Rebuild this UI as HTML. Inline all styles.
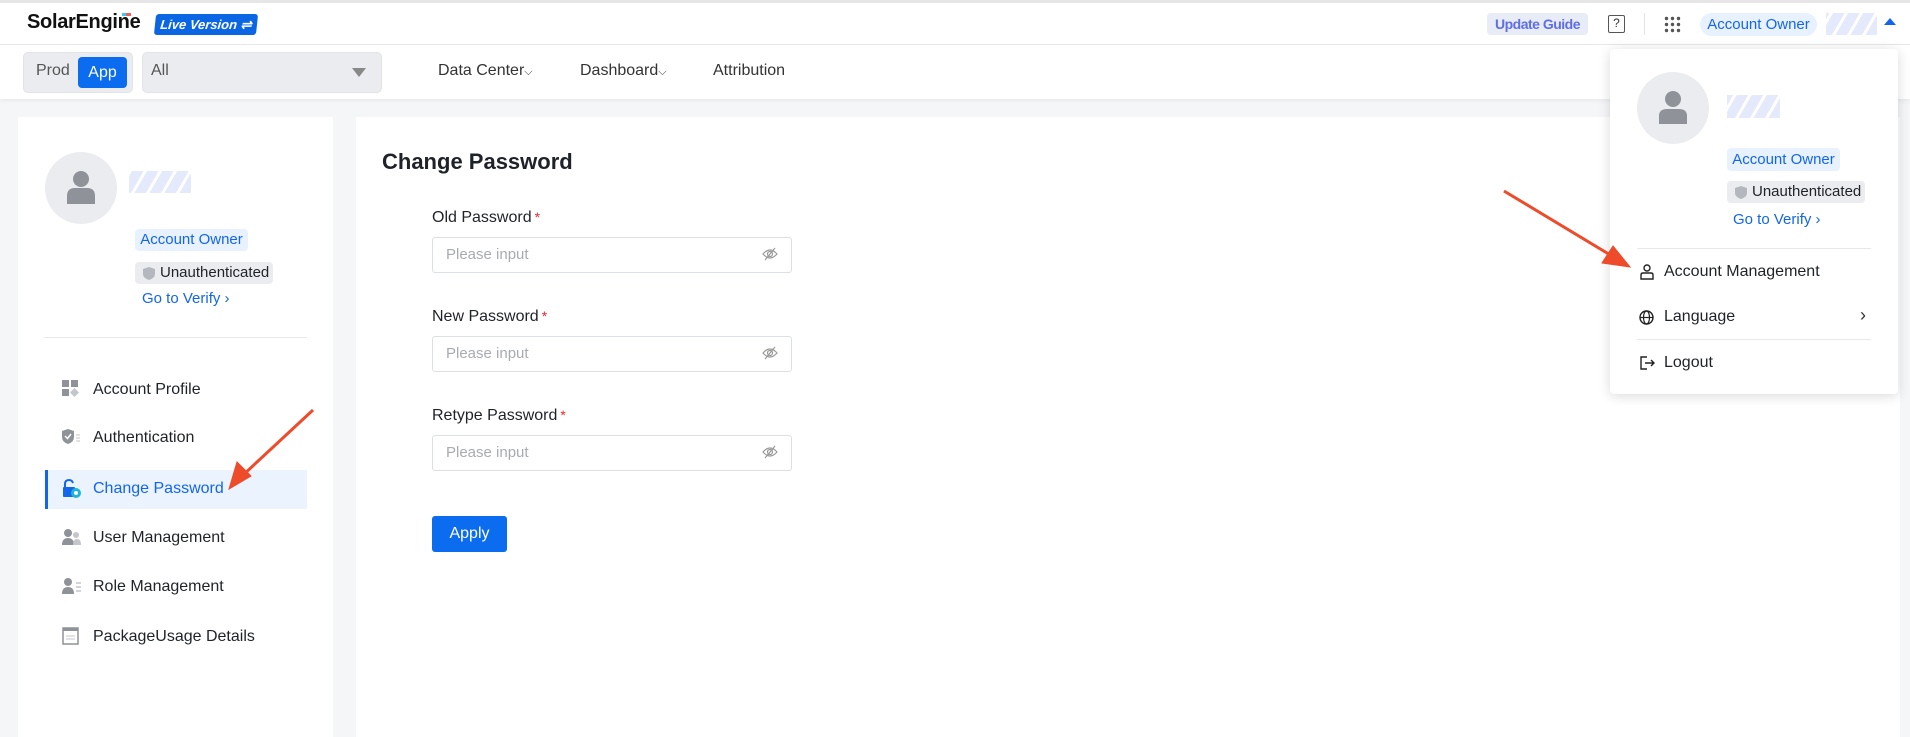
<!DOCTYPE html>
<html><head><meta charset="utf-8"><style>
*{box-sizing:border-box;margin:0;padding:0}
body{width:1910px;height:726px;overflow:hidden;background:#f5f6f8;font-family:"Liberation Sans",Arial,sans-serif;color:#1f2329;position:relative}
.abs{position:absolute}
.hdr{left:0;top:0;width:1910px;height:45px;background:#fff;border-top:3px solid #e6e6e6;border-bottom:1px solid #e8e8e8}
.bar2{left:0;top:45px;width:1910px;height:54px;background:#fff;box-shadow:0 2px 4px rgba(0,0,0,.05)}
.tagb{background:#e8f1fe;color:#1366ec;border-radius:4px;font-size:15px}
.tagg{background:#ebecef;color:#1f2329;border-radius:4px;font-size:15px}
.stripe{background:repeating-linear-gradient(-60deg,#e4e9fb 0 10px,#fff 10px 13px)}
.menu{left:62px;font-size:16px;color:#1f2329;height:20px;line-height:20px}
.menu span{position:absolute;left:31px;white-space:nowrap}
.lbl{left:432px;font-size:16px;color:#1f2329}
.lbl b{color:#f5222d;font-weight:normal;font-size:14px;margin-left:3px}
.inp{left:432px;width:360px;height:36px;border:1px solid #dcdfe6;border-radius:3px;background:#fff;font-size:15px;color:#a8abb2;line-height:34px;padding-left:13px}
.inp svg{position:absolute;right:13px;top:9px}
.dd{font-size:16px;color:#1f2329}
</style></head><body>
<div class="abs hdr"></div>
<div class="abs" style="left:27px;top:11px;font-size:20px;font-weight:bold;letter-spacing:-0.3px;color:#111">SolarEngine</div>
<div class="abs" style="left:122px;top:13px;width:8px;height:3px;background:#3cc8f0"></div>
<div class="abs" style="left:126px;top:13px;width:5px;height:3px;background:#f06060"></div>
<div class="abs" style="left:155px;top:14px;width:102px;height:21px;background:#0b66e4;border-radius:3px;transform:skewX(-6deg);color:#fff;font-size:13px;font-weight:bold;font-style:italic;line-height:21px;text-align:center">Live Version ⇌</div>
<div class="abs" style="left:1487px;top:13px;width:101px;height:22px;background:#e8ecf7;border-radius:4px;font-size:14px;font-weight:bold;color:#5d6ee8;line-height:22px;text-align:center;letter-spacing:-0.5px">Update Guide</div>
<div class="abs" style="left:1608px;top:15px;width:17px;height:18px;border:1.5px solid #555;border-radius:2px;font-size:12px;text-align:center;line-height:15px;color:#333">?</div>
<div class="abs" style="left:1644px;top:13px;width:1px;height:22px;background:#e3e3e3"></div>
<svg class="abs" style="left:1664px;top:16px" width="17" height="17"><g fill="#555"><circle cx="2.5" cy="2.5" r="1.7"/><circle cx="8.5" cy="2.5" r="1.7"/><circle cx="14.5" cy="2.5" r="1.7"/><circle cx="2.5" cy="8.5" r="1.7"/><circle cx="8.5" cy="8.5" r="1.7"/><circle cx="14.5" cy="8.5" r="1.7"/><circle cx="2.5" cy="14.5" r="1.7"/><circle cx="8.5" cy="14.5" r="1.7"/><circle cx="14.5" cy="14.5" r="1.7"/></g></svg>
<div class="abs tagb" style="left:1700px;top:13px;width:117px;height:23px;border-radius:12px;line-height:23px;text-align:center">Account Owner</div>
<div class="abs stripe" style="left:1826px;top:13px;width:51px;height:22px"></div>
<div class="abs" style="left:1884px;top:18px;width:0;height:0;border-left:6px solid transparent;border-right:6px solid transparent;border-bottom:7px solid #1366ec"></div>

<div class="abs bar2"></div>
<div class="abs" style="left:23px;top:52px;width:110px;height:41px;background:#ebecf0;border-radius:5px;border:1px solid #e2e3e7"></div>
<div class="abs" style="left:36px;top:62px;font-size:16px;color:#555">Prod</div>
<div class="abs" style="left:78px;top:57px;width:49px;height:31px;background:#0b6cf0;border-radius:4px;color:#fff;font-size:16px;line-height:31px;text-align:center">App</div>
<div class="abs" style="left:142px;top:52px;width:240px;height:41px;background:#ebecf0;border-radius:5px;border:1px solid #e2e3e7"></div>
<div class="abs" style="left:151px;top:62px;font-size:16px;color:#555">All</div>
<div class="abs" style="left:352px;top:68px;border-left:7px solid transparent;border-right:7px solid transparent;border-top:9px solid #888"></div>
<div class="abs" style="left:438px;top:62px;font-size:16px;color:#333">Data Center<span style="font-size:11px">⌵</span></div>
<div class="abs" style="left:580px;top:62px;font-size:16px;color:#333">Dashboard<span style="font-size:11px">⌵</span></div>
<div class="abs" style="left:713px;top:62px;font-size:16px;color:#333">Attribution</div>

<!-- left card -->
<div class="abs" style="left:18px;top:117px;width:315px;height:620px;background:#fff"></div>
<div class="abs" style="left:45px;top:152px;width:72px;height:72px;border-radius:50%;background:#ebecef"></div>
<svg class="abs" style="left:67px;top:170px" width="28" height="34"><circle cx="14" cy="9" r="8" fill="#8f9299"/><path d="M0 34V26Q0 18 8 18H20Q28 18 28 26V34Z" fill="#8f9299"/></svg>
<div class="abs stripe" style="left:129px;top:171px;width:62px;height:22px"></div>
<div class="abs tagb" style="left:135px;top:229px;width:113px;height:22px;line-height:22px;text-align:center">Account Owner</div>
<div class="abs tagg" style="left:135px;top:262px;width:138px;height:22px;line-height:22px;padding-left:25px">Unauthenticated</div>
<svg class="abs" style="left:143px;top:267px" width="12" height="13"><path d="M6 0L12 2V7Q12 11 6 13Q0 11 0 7V2Z" fill="#b4b7bd"/></svg>
<div class="abs" style="left:142px;top:290px;font-size:15px;color:#1366ec">Go to Verify ›</div>
<div class="abs" style="left:44px;top:337px;width:263px;height:1px;background:#e8e8e8"></div>

<div class="abs" style="left:45px;top:470px;width:262px;height:39px;background:#ebf3fe;border-left:3px solid #1366ec"></div>
<div class="abs menu" style="top:380px"><svg width="18" height="18"><rect x="0" y="0" width="7" height="7" fill="#8f9299"/><rect x="9" y="0" width="7" height="7" fill="#8f9299"/><rect x="0" y="9" width="7" height="7" fill="#8f9299"/><path d="M12.5 8L17 12.5L12.5 17L8 12.5Z" fill="#c4c6cc"/></svg><span>Account Profile</span></div>
<div class="abs menu" style="top:428px"><svg width="18" height="18"><path d="M6 1L12 3V9Q12 14 6 16Q0 14 0 9V3Z" fill="#8f9299"/><path d="M3 8L5.5 10.5L9 6" stroke="#fff" stroke-width="1.5" fill="none"/><path d="M14 7H18M14 10H18M14 13H18" stroke="#c4c6cc"/></svg><span>Authentication</span></div>
<div class="abs menu" style="top:479px"><svg width="20" height="20"><path d="M3 8V5Q3 1 7 1Q10 1 11 4" stroke="#1366ec" stroke-width="2" fill="none"/><rect x="1" y="8" width="12" height="10" rx="1" fill="#1366ec"/><circle cx="14" cy="14" r="5" fill="#20b4d8"/><circle cx="14" cy="14" r="2" fill="#fff"/></svg><span style="color:#1366ec">Change Password</span></div>
<div class="abs menu" style="top:528px"><svg width="20" height="18"><circle cx="6" cy="5" r="4" fill="#8f9299"/><path d="M0 17Q0 10 6 10Q12 10 12 17Z" fill="#8f9299"/><circle cx="14" cy="7" r="3" fill="#c4c6cc"/><path d="M11 17Q11 11 15 11Q19 11 19 17Z" fill="#c4c6cc"/></svg><span>User Management</span></div>
<div class="abs menu" style="top:577px"><svg width="20" height="18"><circle cx="6" cy="5" r="4" fill="#8f9299"/><path d="M0 17Q0 10 6 10Q12 10 12 17Z" fill="#8f9299"/><path d="M14 6H19M14 10H19M14 14H19" stroke="#c4c6cc" stroke-width="1.5"/></svg><span>Role Management</span></div>
<div class="abs menu" style="top:627px"><svg width="18" height="18"><rect x="1" y="1" width="15" height="16" fill="none" stroke="#8f9299" stroke-width="1.5"/><rect x="1" y="1" width="15" height="3" fill="#8f9299"/><path d="M4 9H13M4 12H13" stroke="#c4c6cc"/></svg><span>PackageUsage Details</span></div>

<!-- main -->
<div class="abs" style="left:356px;top:117px;width:1544px;height:620px;background:#fff"></div>
<div class="abs" style="left:382px;top:149px;font-size:22px;font-weight:bold;color:#1f2329">Change Password</div>
<div class="abs lbl" style="top:209px">Old Password<b>*</b></div>
<div class="abs inp" style="top:237px">Please input<svg width="16" height="14"><path d="M1 7Q8 -1 15 7Q8 15 1 7Z" fill="none" stroke="#999" stroke-width="1.2"/><circle cx="8" cy="7" r="2.5" fill="none" stroke="#999" stroke-width="1.2"/><path d="M3 13L13 1" stroke="#999" stroke-width="1.2"/></svg></div>
<div class="abs lbl" style="top:308px">New Password<b>*</b></div>
<div class="abs inp" style="top:336px">Please input<svg width="16" height="14"><path d="M1 7Q8 -1 15 7Q8 15 1 7Z" fill="none" stroke="#999" stroke-width="1.2"/><circle cx="8" cy="7" r="2.5" fill="none" stroke="#999" stroke-width="1.2"/><path d="M3 13L13 1" stroke="#999" stroke-width="1.2"/></svg></div>
<div class="abs lbl" style="top:407px">Retype Password<b>*</b></div>
<div class="abs inp" style="top:435px">Please input<svg width="16" height="14"><path d="M1 7Q8 -1 15 7Q8 15 1 7Z" fill="none" stroke="#999" stroke-width="1.2"/><circle cx="8" cy="7" r="2.5" fill="none" stroke="#999" stroke-width="1.2"/><path d="M3 13L13 1" stroke="#999" stroke-width="1.2"/></svg></div>
<div class="abs" style="left:432px;top:516px;width:75px;height:36px;background:#0b6cf0;border-radius:3px;color:#fff;font-size:16px;line-height:36px;text-align:center">Apply</div>

<!-- dropdown -->
<div class="abs" style="left:1610px;top:49px;width:288px;height:345px;background:#fff;border-radius:4px;box-shadow:0 2px 12px rgba(0,0,0,.15)"></div>
<div class="abs" style="left:1637px;top:72px;width:72px;height:72px;border-radius:50%;background:#ebecef"></div>
<svg class="abs" style="left:1659px;top:91px" width="28" height="33"><circle cx="14" cy="8" r="8" fill="#8f9299"/><path d="M0 33V25Q0 18 8 18H20Q28 18 28 25V33Z" fill="#8f9299"/></svg>
<div class="abs stripe" style="left:1727px;top:95px;width:53px;height:23px"></div>
<div class="abs tagb" style="left:1727px;top:148px;width:113px;height:23px;line-height:23px;text-align:center">Account Owner</div>
<div class="abs tagg" style="left:1727px;top:181px;width:138px;height:22px;line-height:22px;padding-left:25px">Unauthenticated</div>
<svg class="abs" style="left:1735px;top:186px" width="12" height="13"><path d="M6 0L12 2V7Q12 11 6 13Q0 11 0 7V2Z" fill="#b4b7bd"/></svg>
<div class="abs" style="left:1733px;top:211px;font-size:15px;color:#1366ec">Go to Verify ›</div>
<div class="abs" style="left:1637px;top:248px;width:234px;height:1px;background:#e8e8e8"></div>
<svg class="abs" style="left:1640px;top:264px" width="14" height="16"><circle cx="7" cy="4" r="3" fill="none" stroke="#222" stroke-width="1.4"/><path d="M1 15V11Q1 9 3 9H11Q13 9 13 11V15Z" fill="none" stroke="#222" stroke-width="1.4"/></svg>
<div class="abs dd" style="left:1664px;top:263px">Account Management</div>
<svg class="abs" style="left:1639px;top:310px" width="15" height="15"><circle cx="7.5" cy="7.5" r="6.5" fill="none" stroke="#222" stroke-width="1.4"/><ellipse cx="7.5" cy="7.5" rx="3" ry="6.5" fill="none" stroke="#222" stroke-width="1.2"/><path d="M1 7.5H14" stroke="#222" stroke-width="1.2"/></svg>
<div class="abs dd" style="left:1664px;top:308px">Language</div>
<div class="abs" style="left:1860px;top:305px;font-size:18px;color:#333">›</div>
<div class="abs" style="left:1637px;top:339px;width:234px;height:1px;background:#e8e8e8"></div>
<svg class="abs" style="left:1640px;top:356px" width="15" height="14"><path d="M7 1H1V13H7" fill="none" stroke="#222" stroke-width="1.4"/><path d="M5 7H14M11 4L14 7L11 10" fill="none" stroke="#222" stroke-width="1.4"/></svg>
<div class="abs dd" style="left:1664px;top:354px">Logout</div>

<!-- arrows -->
<svg class="abs" style="left:0;top:0" width="1910" height="726">
<g fill="#ee4b2b" stroke="#ee4b2b">
<path d="M1504 191L1612 256" stroke-width="3"/><path d="M1630 267L1602 263L1613 246Z"/>
<path d="M313 410L242 476" stroke-width="3"/><path d="M229 489L237 462L251 476Z"/>
</g></svg>
</body></html>
